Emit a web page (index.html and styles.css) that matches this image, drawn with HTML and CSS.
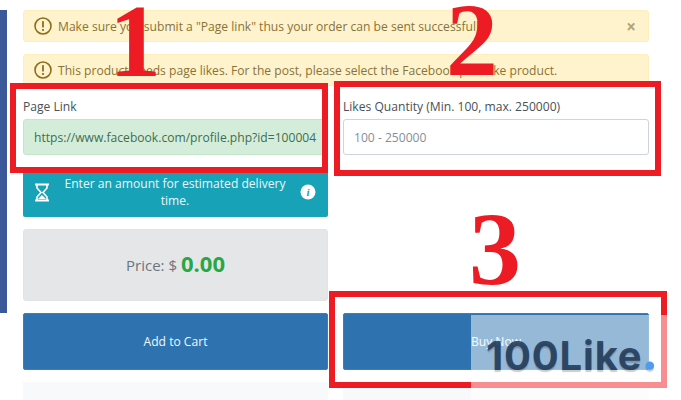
FILE: index.html
```html
<!DOCTYPE html>
<html lang="en">
<head>
<meta charset="utf-8">
<title>Order</title>
<link rel="stylesheet" href="styles.css">
</head>
<body>
<div class="page">
  <aside class="strip"></aside>
  <main class="main">
    <div class="alert">
      <svg class="alert-icon" viewBox="0 0 18 18"><circle cx="9" cy="9" r="8" fill="none" stroke="#8d6c1c" stroke-width="1.6"/><rect x="8.1" y="4" width="1.8" height="6.5" rx=".6" fill="#8d6c1c"/><rect x="8.1" y="12" width="1.8" height="1.9" fill="#8d6c1c"/></svg>
      <span class="alert-text">Make sure you submit a "Page link" thus your order can be sent successfully</span>
      <span class="close">×</span>
    </div>
    <div class="alert">
      <svg class="alert-icon" viewBox="0 0 18 18"><circle cx="9" cy="9" r="8" fill="none" stroke="#8d6c1c" stroke-width="1.6"/><rect x="8.1" y="4" width="1.8" height="6.5" rx=".6" fill="#8d6c1c"/><rect x="8.1" y="12" width="1.8" height="1.9" fill="#8d6c1c"/></svg>
      <span class="alert-text">This product needs page likes. For the post, please select the Facebook post like product.</span>
    </div>
    <div class="form-grid">
      <div class="field">
        <label class="label">Page Link</label>
        <input class="input input-valid" type="text" value="https://www.facebook.com/profile.php?id=100004712345678">
      </div>
      <div class="field">
        <label class="label">Likes Quantity (Min. 100, max. 250000)</label>
        <input class="input" type="text" placeholder="100 - 250000">
      </div>
      <div class="summary">
        <div class="info">
          <svg class="hourglass" viewBox="0 0 16 18"><path d="M1 1h14M1 17h14" stroke="#fff" stroke-width="2" fill="none"/><path d="M3 1v3.500L7 9l-4 4.500V17M13 1v3.500L9 9l4 4.500V17" stroke="#fff" stroke-width="1.600" fill="none"/><path d="M4 15.500L8 11.500l4 4z" fill="#fff"/></svg>
          <span class="info-text">Enter an amount for estimated delivery time.</span>
          <svg class="info-icon" viewBox="0 0 16 16"><circle cx="8" cy="8" r="7.500" fill="#fff"/><text x="8" y="12" class="info-i">i</text></svg>
        </div>
        <div class="price">
          <span>Price: $</span>
          <strong class="amount">0.00</strong>
        </div>
      </div>
      <div></div>
      <button class="btn" type="button">Add to Cart</button>
      <button class="btn" type="button">Buy Now</button>
      <div class="panel"></div>
      <div class="panel"></div>
    </div>
  </main>
</div>
<div class="mark mark-1"></div>
<div class="mark mark-2"></div>
<div class="mark mark-3"></div>
<span class="num num-1">1</span>
<span class="num num-2">2</span>
<span class="num num-3">3</span>
<div class="watermark"><span class="wm-text">100Like<span class="wm-dot">.</span></span></div>
</body>
</html>
```
FILE: styles.css
```css
* { box-sizing: border-box; }
html, body { margin: 0; height: 400px; overflow: hidden; background: #fff; }
body { font-family: "Open Sans", sans-serif; font-size: 12.1px; color: #495057; position: relative; }
.page { display: flex; gap: 16px; padding-top: 10px; height: 400px; overflow: hidden; }
.strip { width: 7px; height: 303px; background: #3b5998; flex: none; }
.main { width: 626px; flex: none; }
.alert { display: flex; align-items: center; height: 32px; margin-bottom: 12px; padding: 0 10px; background: #fff3cd; border: 1px solid #ffeeba; border-radius: 3px; color: #8a7235; }
.alert-icon { width: 18px; height: 18px; flex: none; margin-right: 6px; }
.alert-text { flex: 1; white-space: nowrap; }
.close { font-size: 17px; font-weight: 700; line-height: 1; color: #b5a56b; margin-right: 2px; }
.form-grid { display: grid; grid-template-columns: 305px 306px; column-gap: 15px; }
.field { height: 69px; }
.label { display: block; height: 21px; line-height: 18px; color: #495057; }
.input { display: block; width: 100%; height: 36px; padding: 0 10px; font: 12.1px "Open Sans", sans-serif; color: #495057; background: #fff; border: 1px solid #ced4da; border-radius: 3px; outline: none; }
.input::placeholder { color: #868e96; opacity: 1; }
.input-valid { background: #d4edda; border-color: #c3e6cb; color: #3f6d4e; }
.info { display: flex; align-items: center; height: 50px; padding: 0 12px 0 11px; background: #17a2b8; border-radius: 2px; color: #e8f7f9; }
.hourglass { width: 16px; height: 19px; flex: none; }
.info-text { flex: 1; text-align: center; padding: 0 8px; line-height: 17px; }
.info-icon { width: 16px; height: 16px; flex: none; }
.info-i { font: italic 700 11px "Liberation Serif", serif; text-anchor: middle; fill: #17a2b8; }
.price { display: flex; align-items: center; justify-content: center; gap: 4px; height: 72px; margin-top: 12px; margin-bottom: 12px; background: #e5e6e8; border: 1px solid #e2e3e5; border-radius: 3px; font-size: 15px; color: #6c757d; }
.amount { font-size: 22px; font-weight: 700; color: #28a745; position: relative; top: -2px; }
.btn { height: 57px; margin: 0 0 12px; padding: 0; font: 12.1px "Open Sans", sans-serif; color: #f0f6fb; background: #2e73b0; border: 1px solid #3a7fbc; border-radius: 2px; }
.panel { height: 18px; background: #f8f9fa; }
.mark { position: absolute; border: 6px solid #ed1c24; }
.mark-1 { left: 10px; top: 83px; width: 318px; height: 90px; }
.mark-2 { left: 334px; top: 81px; width: 327px; height: 95px; }
.mark-3 { left: 329px; top: 291px; width: 338px; height: 97px; }
.num { position: absolute; font: 700 104px/1 "Liberation Serif", serif; color: #ed1c24; }
.num-1 { left: 109px; top: -11px; }
.num-2 { left: 446px; top: -12px; }
.num-3 { left: 469px; top: 197px; }
.watermark { position: absolute; left: 471px; top: 315px; width: 210px; height: 85px; background: rgba(255,255,255,.5); }
.wm-text { position: absolute; left: 15px; top: 17px; font: 700 40px/1.2 Inter, sans-serif; letter-spacing: .8px; color: rgba(30,55,85,.85); text-shadow: 0 2px 1px rgba(0,0,0,.2); white-space: nowrap; }
.wm-dot { font-size: 50px; line-height: 0; margin-left: -1px; color: #4f9bf0; }
```
